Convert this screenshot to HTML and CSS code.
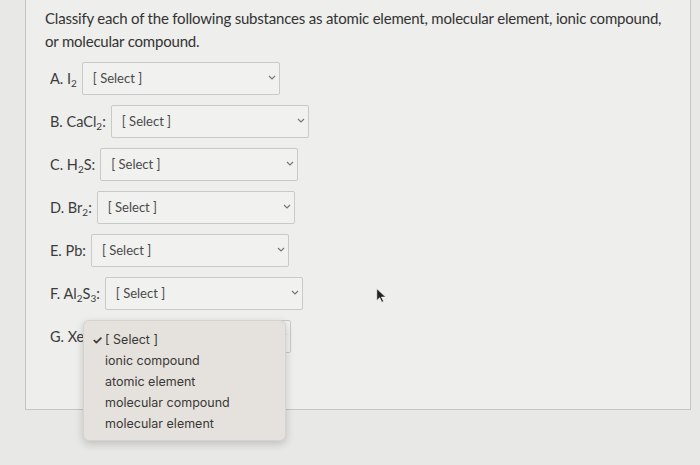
FILE: index.html
```html
<!DOCTYPE html>
<html lang="en">
<head>
<meta charset="UTF-8">
<title>Classify substances</title>
<link rel="stylesheet" href="styles.css">
</head>
<body>
<div class="panel">
    <p class="prompt">Classify each of the following substances as atomic element, molecular element, ionic compound, or molecular compound.</p>
    <div class="rows">
        <div class="row">
            <span class="label">A. I<sub>2</sub></span>
            <div class="select"><span>[ Select ]</span><svg class="chev" viewBox="0 0 8 5"><path d="M1 1l3 3 3-3"/></svg></div>
        </div>
        <div class="row">
            <span class="label">B. CaCl<sub>2</sub>:</span>
            <div class="select"><span>[ Select ]</span><svg class="chev" viewBox="0 0 8 5"><path d="M1 1l3 3 3-3"/></svg></div>
        </div>
        <div class="row">
            <span class="label">C. H<sub>2</sub>S:</span>
            <div class="select"><span>[ Select ]</span><svg class="chev" viewBox="0 0 8 5"><path d="M1 1l3 3 3-3"/></svg></div>
        </div>
        <div class="row">
            <span class="label">D. Br<sub>2</sub>:</span>
            <div class="select"><span>[ Select ]</span><svg class="chev" viewBox="0 0 8 5"><path d="M1 1l3 3 3-3"/></svg></div>
        </div>
        <div class="row">
            <span class="label">E. Pb:</span>
            <div class="select"><span>[ Select ]</span><svg class="chev" viewBox="0 0 8 5"><path d="M1 1l3 3 3-3"/></svg></div>
        </div>
        <div class="row">
            <span class="label">F. Al<sub>2</sub>S<sub>3</sub>:</span>
            <div class="select"><span>[ Select ]</span><svg class="chev" viewBox="0 0 8 5"><path d="M1 1l3 3 3-3"/></svg></div>
        </div>
        <div class="row row-open">
            <span class="label">G. Xe:</span>
            <div class="select"><span class="hidden">[ Select ]</span><svg class="chev" viewBox="0 0 8 5"><path d="M1 1l3 3 3-3"/></svg></div>
            <ul class="menu">
                <li class="checked"><span class="tick">&#10003;</span>[ Select ]</li>
                <li>ionic compound</li>
                <li>atomic element</li>
                <li>molecular compound</li>
                <li>molecular element</li>
            </ul>
        </div>
    </div>
</div>
<svg class="cursor" viewBox="0 0 12 18"><path d="M1 1v14l3.5-3.5 2.5 5.5 2-1-2.5-5.2h5z"/></svg>
</body>
</html>
```

FILE: styles.css
```css
* {
    margin: 0;
    padding: 0;
    box-sizing: border-box;
}
body {
    background: #e8e8e6;
    font-family: Lato, 'Open Sans', sans-serif;
    color: #3a3a3a;
    position: relative;
    height: 465px;
    overflow: hidden;
}
.panel {
    margin-left: 25px;
    margin-top: -1px;
    width: 666px;
    height: 411px;
    background: #eeeeec;
    border: 1px solid #c4c4c2;
    padding: 7px 20px 0 19px;
}
.prompt {
    font-size: 15px;
    line-height: 23px;
    letter-spacing: -0.2px;
    color: #333;
}
.rows {
    margin-top: 9px;
    padding-left: 5px;
}
.row {
    display: flex;
    align-items: center;
    height: 33px;
    margin-bottom: 10px;
}
.label {
    font-size: 14.5px;
    color: #3c3c3c;
    margin-right: 5px;
}
.label sub {
    font-size: 10px;
    vertical-align: -3px;
    line-height: 0;
}
.select {
    width: 198px;
    height: 33px;
    border: 1px solid #c9c9c7;
    border-radius: 2px;
    background: #f1f1ef;
    display: flex;
    align-items: center;
    justify-content: space-between;
    padding: 0 3px 2px 10px;
    font-size: 13px;
    color: #4a4a4a;
}
.hidden {
    visibility: hidden;
}
.chev {
    width: 8px;
    height: 5px;
    fill: none;
    stroke: #777;
    stroke-width: 1.2;
}
.row-open {
    position: relative;
}
.menu {
    position: absolute;
    left: 33px;
    top: 0;
    width: 203px;
    list-style: none;
    background: #e5e2dd;
    border: 1px solid #d6d3ce;
    border-radius: 6px;
    box-shadow: 0 3px 8px rgba(0, 0, 0, 0.18);
    padding: 8px 0 6px 21px;
    font-family: Inter, 'Liberation Sans', sans-serif;
    font-size: 12.5px;
    color: #3a3836;
}
.menu li {
    height: 21px;
    line-height: 21px;
    position: relative;
}
.tick {
    position: absolute;
    left: -13px;
    font-size: 12px;
    font-weight: 700;
}
.cursor {
    position: absolute;
    left: 376px;
    top: 288px;
    width: 10px;
    height: 15px;
    fill: #222;
    stroke: #fff;
    stroke-width: 0.6;
}
```
